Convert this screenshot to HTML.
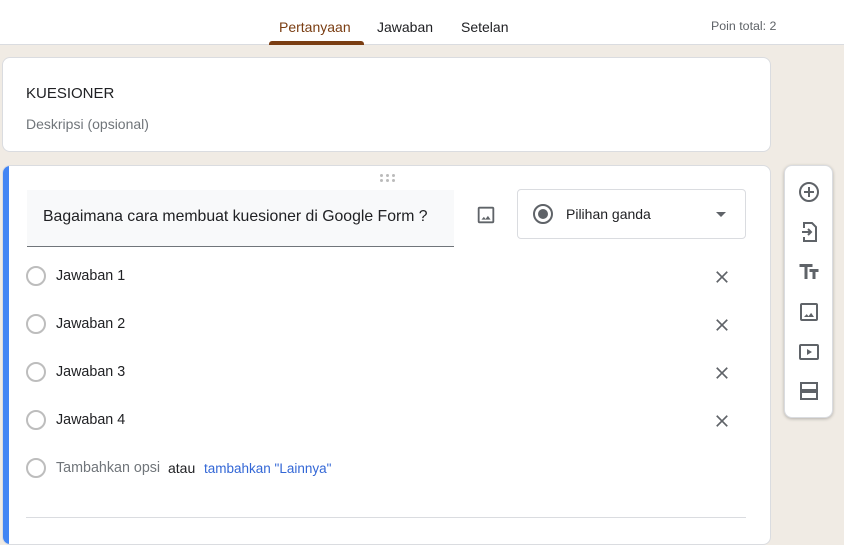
<!DOCTYPE html>
<html><head><style>
*{box-sizing:border-box;margin:0;padding:0}
body{width:844px;height:528px;overflow:hidden;background:#f0ebe4;font-family:"Liberation Sans",sans-serif;position:relative;color:#202124}
.hdr{position:absolute;left:0;top:0;width:844px;height:45px;background:#fff;border-bottom:1px solid #dadce0}
.tab{position:absolute;top:19px;font-size:14px;color:#202124}
.abs{position:absolute}
.card{position:absolute;background:#fff;border:1px solid #dadce0;border-radius:8px}
.opt{position:absolute;left:26px;font-size:14.3px;color:#202124}
.rad{position:absolute;left:26px;width:20px;height:20px;border:2px solid #bdbdbd;border-radius:50%}
.x{position:absolute;left:712px;width:20px;height:20px}
.dot{position:absolute;width:3px;height:3px;background:#bbb;border-radius:50%}
</style></head><body>
<div class="hdr">
<div class="tab" style="left:279px;color:#7a3d12">Pertanyaan</div>
<div class="abs" style="left:269px;top:41px;width:95px;height:4px;background:#7a3d12;border-radius:3px 3px 0 0"></div>
<div class="tab" style="left:377px">Jawaban</div>
<div class="tab" style="left:461px">Setelan</div>
<div class="abs" style="left:711px;top:19px;font-size:12.4px;color:#5f6368">Poin total: 2</div>
</div>
<div class="card" style="left:2px;top:57px;width:769px;height:95px">
<div class="abs" style="left:23px;top:27px;font-size:15px">KUESIONER</div>
<div class="abs" style="left:23px;top:58px;font-size:14px;color:#70757a">Deskripsi (opsional)</div>
</div>
<div class="card" style="left:2px;top:165px;width:769px;height:380px;overflow:hidden">
<div class="abs" style="left:-1px;top:-1px;width:7px;height:380px;background:#4285f4"></div>
<div class="dot" style="left:377px;top:8px"></div><div class="dot" style="left:383px;top:8px"></div><div class="dot" style="left:389px;top:8px"></div>
<div class="dot" style="left:377px;top:13px"></div><div class="dot" style="left:383px;top:13px"></div><div class="dot" style="left:389px;top:13px"></div>
<div class="abs" style="left:24px;top:24px;width:427px;height:57px;background:#f8f9fa;border-bottom:1px solid #70757a"></div>
<div class="abs" style="left:40px;top:42px;font-size:15.8px">Bagaimana cara membuat kuesioner di Google Form ?</div>
<svg class="abs" style="left:472px;top:38px" width="22" height="22" viewBox="0 0 24 24"><path fill="#5f6368" d="M19 3H5a2 2 0 0 0-2 2v14a2 2 0 0 0 2 2h14a2 2 0 0 0 2-2V5a2 2 0 0 0-2-2zm0 16H5V5h14v14zM14.1 12.9l-2.6 3.4-1.8-2.2L7 17h10z"/></svg>
<div class="abs" style="left:514px;top:23px;width:229px;height:50px;border:1px solid #dadce0;border-radius:4px"></div>
<div class="abs" style="left:530px;top:38px;width:20px;height:20px;border:2px solid #5f6368;border-radius:50%"></div>
<div class="abs" style="left:535px;top:43px;width:10px;height:10px;background:#5f6368;border-radius:50%"></div>
<div class="abs" style="left:563px;top:40px;font-size:14px">Pilihan ganda</div>
<div class="abs" style="left:713px;top:46px;border-left:5px solid transparent;border-right:5px solid transparent;border-top:5px solid #5f6368"></div>
</div>
<div class="rad" style="top:266px"></div><div class="opt" style="left:56px;top:268px">Jawaban 1</div>
<div class="rad" style="top:314px"></div><div class="opt" style="left:56px;top:316px">Jawaban 2</div>
<div class="rad" style="top:362px"></div><div class="opt" style="left:56px;top:364px">Jawaban 3</div>
<div class="rad" style="top:410px"></div><div class="opt" style="left:56px;top:412px">Jawaban 4</div>
<div class="rad" style="top:458px"></div>
<div class="opt" style="left:56px;top:460px;color:#70757a">Tambahkan opsi</div>
<div class="opt" style="left:168px;top:460px;font-size:14px">atau</div>
<div class="opt" style="left:204px;top:461px;font-size:13.5px;color:#3367d6">tambahkan "Lainnya"</div>
<div class="abs" style="left:26px;top:517px;width:720px;height:1px;background:#dadce0"></div>
<svg class="x" style="top:267px" viewBox="0 0 24 24"><path fill="#5f6368" d="M19 6.41 17.59 5 12 10.59 6.41 5 5 6.41 10.59 12 5 17.59 6.41 19 12 13.41 17.59 19 19 17.59 13.41 12z"/></svg>
<svg class="x" style="top:315px" viewBox="0 0 24 24"><path fill="#5f6368" d="M19 6.41 17.59 5 12 10.59 6.41 5 5 6.41 10.59 12 5 17.59 6.41 19 12 13.41 17.59 19 19 17.59 13.41 12z"/></svg>
<svg class="x" style="top:363px" viewBox="0 0 24 24"><path fill="#5f6368" d="M19 6.41 17.59 5 12 10.59 6.41 5 5 6.41 10.59 12 5 17.59 6.41 19 12 13.41 17.59 19 19 17.59 13.41 12z"/></svg>
<svg class="x" style="top:411px" viewBox="0 0 24 24"><path fill="#5f6368" d="M19 6.41 17.59 5 12 10.59 6.41 5 5 6.41 10.59 12 5 17.59 6.41 19 12 13.41 17.59 19 19 17.59 13.41 12z"/></svg>
<div class="card" style="left:784px;top:165px;width:49px;height:253px;box-shadow:0 1px 3px rgba(0,0,0,.25)">
<svg class="abs" style="left:12px;top:14px" width="24" height="24" viewBox="0 0 24 24"><circle cx="12" cy="12" r="9" fill="none" stroke="#5f6368" stroke-width="2"/><path d="M12 7v10M7 12h10" stroke="#5f6368" stroke-width="2"/></svg>
<svg class="abs" style="left:12px;top:54px" width="24" height="24" viewBox="0 0 24 24"><path d="M7 8V3h8l4 4v14H7v-4" fill="none" stroke="#5f6368" stroke-width="2"/><path d="M5 12h9M11 9l3 3-3 3" fill="none" stroke="#5f6368" stroke-width="2"/></svg>
<svg class="abs" style="left:12px;top:94px" width="24" height="24" viewBox="0 0 24 24"><path fill="#5f6368" d="M2.5 4v3h5v12h3V7h5V4zm19 5h-9v3h3v7h3v-7h3z"/></svg>
<svg class="abs" style="left:12px;top:134px" width="24" height="24" viewBox="0 0 24 24"><path fill="#5f6368" d="M19 3H5a2 2 0 0 0-2 2v14a2 2 0 0 0 2 2h14a2 2 0 0 0 2-2V5a2 2 0 0 0-2-2zm0 16H5V5h14v14zM14.1 12.9l-2.6 3.4-1.8-2.2L7 17h10z"/></svg>
<svg class="abs" style="left:12px;top:174px" width="24" height="24" viewBox="0 0 24 24"><rect x="3" y="5" width="18" height="14" rx="1" fill="none" stroke="#5f6368" stroke-width="2"/><path d="M10 9v6l5-3z" fill="#5f6368"/></svg>
<svg class="abs" style="left:12px;top:213px" width="24" height="24" viewBox="0 0 24 24"><rect x="4" y="4" width="16" height="7" fill="none" stroke="#5f6368" stroke-width="2"/><rect x="4" y="13" width="16" height="7" fill="none" stroke="#5f6368" stroke-width="2"/></svg>
</div>
</body></html>
